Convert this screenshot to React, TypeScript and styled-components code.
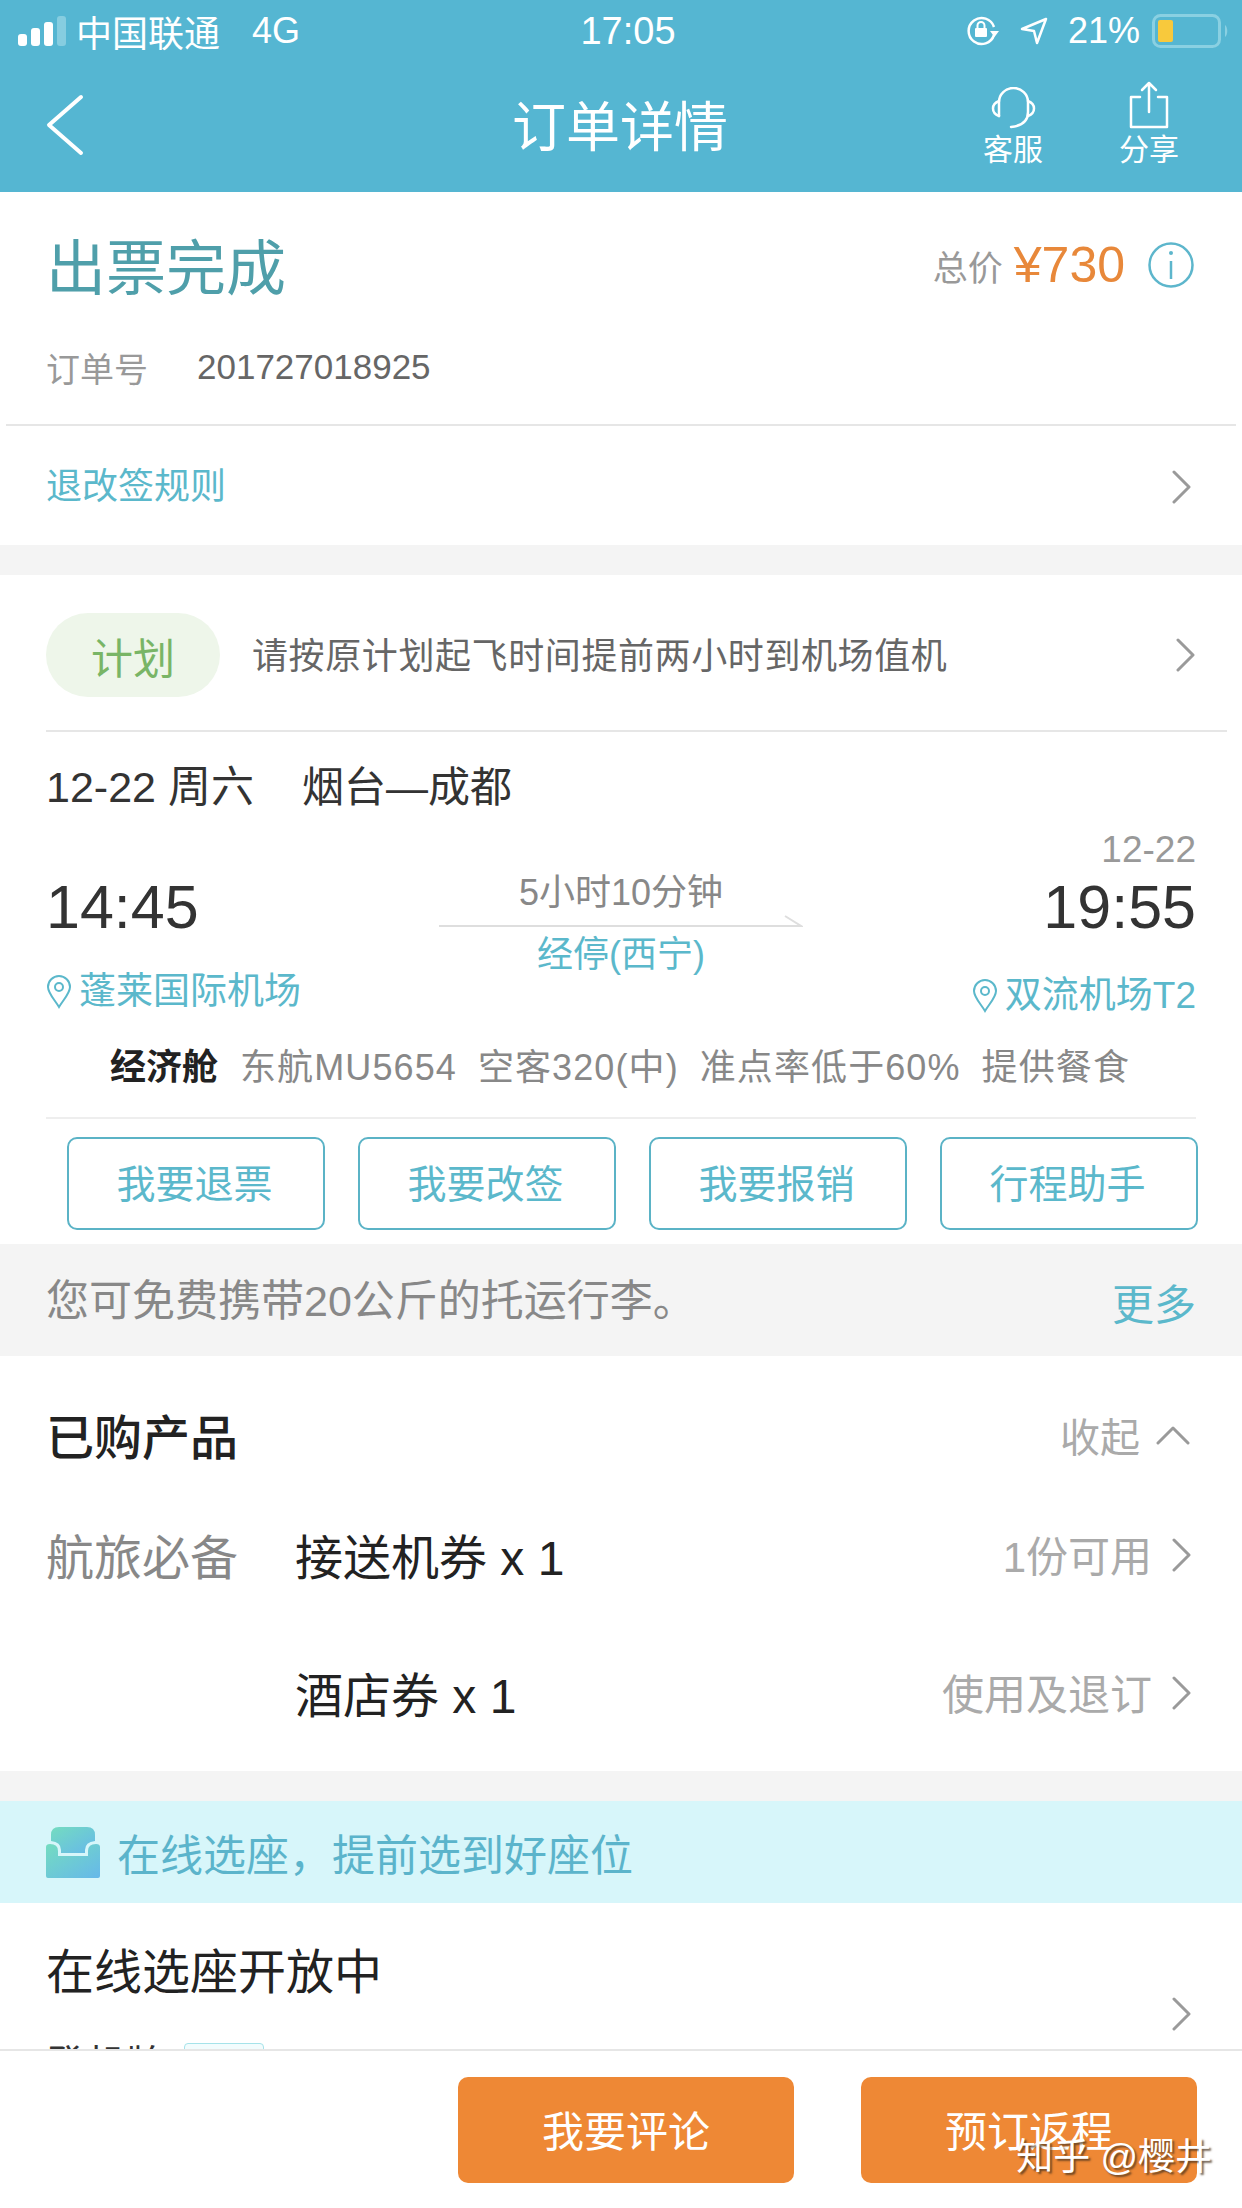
import styled, { createGlobalStyle } from 'styled-components'

const Global = createGlobalStyle`
    html, body {
        margin: 0;
        padding: 0;
        background: #fff;
    }
    body {
        font-family: "Liberation Sans", "Noto Sans CJK SC", sans-serif;
        color: #333;
    }
    * {
        box-sizing: border-box;
    }
`

const Page = styled.div`
    position: relative;
    width: 1242px;
    height: 2208px;
    overflow: hidden;
    background: #fff;
`

const Header = styled.header`
    background: #55b6d2;
    color: #fff;
    height: 192px;
`
const StatusBar = styled.div`
    height: 62px;
    padding: 0 12px 0 18px;
    display: grid;
    grid-template-columns: 1fr auto 1fr;
    align-items: center;
    font-size: 36px;
`
const StatusLeft = styled.div`
    display: flex;
    align-items: center;
`
const Carrier = styled.span`
    margin-left: 10px;
    margin-right: 32px;
`
const Clock = styled.div`
    font-size: 38px;
    margin-left: 8px;
`
const StatusRight = styled.div`
    display: flex;
    align-items: center;
    justify-content: flex-end;
`
const Percent = styled.span`
    margin: 0 12px 0 20px;
`
const Nav = styled.nav`
    height: 130px;
    display: grid;
    grid-template-columns: 1fr auto 1fr;
    align-items: center;
    padding: 0 63px 0 46px;
`
const NavTitle = styled.div`
    font-size: 54px;
    margin-top: -8px;
    margin-left: 15px;
`
const NavActions = styled.div`
    display: flex;
    justify-content: flex-end;
    gap: 76px;
    margin-top: 4px;
`
const NavAction = styled.div`
    display: flex;
    flex-direction: column;
    align-items: center;
    gap: 3px;
    font-size: 30px;
    line-height: 36px;
`

const Section = styled.section<{ $bottom?: number }>`
    background: #fff;
    padding-bottom: ${props => props.$bottom || 0}px;
`
const Gap = styled.div`
    height: 30px;
    background: #f4f4f4;
`
const Divider = styled.div<{ $left: number; $right: number; $color?: string }>`
    height: 2px;
    margin: 0 ${props => props.$right}px 0 ${props => props.$left}px;
    background: ${props => props.$color || '#e6e6e6'};
`

const TitleRow = styled.div`
    height: 138px;
    padding: 5px 48px 0 46px;
    display: flex;
    align-items: center;
    justify-content: space-between;
`
const StatusTitle = styled.h1`
    margin: 0;
    font-size: 60px;
    font-weight: 400;
    color: #4f9faa;
`
const PriceBox = styled.div`
    display: flex;
    align-items: center;
    margin-top: 3px;
`
const PriceLabel = styled.span`
    font-size: 35px;
    color: #999;
    margin-right: 11px;
`
const PriceValue = styled.span`
    font-size: 50px;
    color: #e8883a;
    margin-right: 23px;
`
const OrderRow = styled.div`
    height: 94px;
    padding: 0 46px 20px;
    display: flex;
    align-items: center;
    font-size: 34px;
`
const OrderLabel = styled.span`
    color: #999;
    width: 151px;
`
const OrderNumber = styled.span`
    color: #666;
    font-size: 35px;
`
const RuleRow = styled.div`
    height: 119px;
    padding: 0 50px 6px 46px;
    display: flex;
    align-items: center;
    justify-content: space-between;
    font-size: 36px;
    color: #5bb8cb;

    svg {
        margin-top: 8px;
    }
`

const PlanRow = styled.div`
    height: 155px;
    padding: 38px 46px 33px 46px;
    display: flex;
    align-items: center;
    font-size: 36px;
    color: #666;
`
const PlanPill = styled.div`
    width: 174px;
    height: 84px;
    border-radius: 42px;
    background: #eef6ea;
    color: #79b566;
    font-size: 42px;
    display: flex;
    align-items: center;
    justify-content: center;
    margin-right: 32px;
`
const PlanText = styled.span`
    flex: 1;
    letter-spacing: .6px;
    margin-top: -5px;
`
const RouteRow = styled.div`
    height: 62px;
    padding: 0 46px;
    display: flex;
    align-items: center;
    font-size: 43px;
    color: #333;
    margin-top: 20px;
`
const RouteCities = styled.span`
    font-size: 42px;
    margin-left: 48px;
`
const FlightGrid = styled.div`
    display: grid;
    grid-template-columns: 1fr 364px 1fr;
    padding: 0 46px;
    height: 216px;
`
const FlightSide = styled.div<{ $right?: boolean }>`
    display: flex;
    flex-direction: column;
    align-items: ${props => props.$right ? 'flex-end' : 'flex-start'};
`
const DateSmall = styled.div`
    height: 40px;
    line-height: 40px;
    margin-top: 16px;
    font-size: 37px;
    color: #999;
`
const TimeBig = styled.div<{ $top: number }>`
    font-size: 61px;
    line-height: 70px;
    color: #333;
    margin-top: ${props => props.$top}px;
`
const Airport = styled.div<{ $top: number }>`
    display: flex;
    align-items: center;
    gap: 7px;
    font-size: 37px;
    line-height: 44px;
    color: #5bb8cb;
    margin-top: ${props => props.$top}px;
`
const FlightMiddle = styled.div`
    display: flex;
    flex-direction: column;
    align-items: center;
    padding-top: 57px;
`
const Duration = styled.div`
    font-size: 36px;
    line-height: 44px;
    color: #888;
`
const ArrowLine = styled.svg`
    display: block;
    margin-top: -1px;
`
const StopInfo = styled.div`
    font-size: 36px;
    line-height: 44px;
    color: #5bb8cb;
    margin-top: 5px;
`
const InfoRow = styled.div`
    height: 87px;
    padding: 0 0 19px 110px;
    display: flex;
    align-items: center;
    font-size: 36px;
    color: #888;
    white-space: nowrap;
`
const CabinName = styled.b`
    color: #222;
    margin-right: 22px;
`
const InfoItem = styled.span`
    margin-right: 21px;
    letter-spacing: 1.1px;
`
const ButtonRow = styled.div`
    display: grid;
    grid-template-columns: repeat(4, 258px);
    gap: 33px;
    padding: 18px 0 14px 67px;
`
const OutlineButton = styled.div`
    height: 93px;
    padding: 0 3px 5px 0;
    border: 2px solid #5bb3c6;
    border-radius: 10px;
    color: #5bb8cb;
    font-size: 39px;
    display: flex;
    align-items: center;
    justify-content: center;
`
const BaggageBar = styled.div`
    height: 112px;
    background: #f4f4f4;
    padding: 0 46px 6px;
    display: flex;
    align-items: center;
    justify-content: space-between;
    font-size: 43px;
    color: #888;
`
const MoreLink = styled.span`
    font-size: 42px;
    color: #5bb8cb;
    margin-top: 8px;
`

const ProductHead = styled.div`
    height: 129px;
    padding: 27px 52px 0 46px;
    display: flex;
    align-items: center;
    justify-content: space-between;
`
const ProductTitle = styled.h2`
    margin: 0;
    font-size: 48px;
    font-weight: 500;
    color: #222;
`
const Collapse = styled.div`
    display: flex;
    align-items: center;
    gap: 16px;
    margin-top: 2px;
    font-size: 40px;
    color: #aaa;
`
const ProductRow = styled.div<{ $height: number }>`
    height: ${props => props.$height}px;
    padding: 0 50px 0 46px;
    display: grid;
    grid-template-columns: 249px 1fr auto;
    align-items: center;
`
const ProductGroup = styled.span`
    font-size: 48px;
    color: #888;
`
const ProductName = styled.span`
    font-size: 48px;
    color: #222;
`
const ProductAction = styled.span`
    display: flex;
    align-items: center;
    gap: 20px;
    font-size: 42px;
    color: #aaa;

    svg {
        margin-top: 3px;
    }
`

const SeatBanner = styled.div`
    height: 102px;
    background: #d7f6fa;
    padding: 0 46px;
    display: flex;
    align-items: center;
    font-size: 43px;
    color: #5bb4cb;
`
const SeatBody = styled.div`
    position: relative;
    padding: 41px 46px 0;
`
const SeatTitle = styled.div`
    font-size: 48px;
    line-height: 58px;
    color: #222;
`
const SeatChevron = styled.div`
    position: absolute;
    top: 94px;
    right: 50px;
`
const SeatMeta = styled.div`
    display: flex;
    align-items: flex-start;
    gap: 18px;
    margin-top: 41px;
    font-size: 40px;
    line-height: 44px;
    color: #333;
`
const SeatTag = styled.span`
    width: 80px;
    height: 44px;
    background: #f2fcfd;
    border: 1px solid #a5e3ea;
    border-radius: 4px;
`

const BottomBar = styled.div`
    position: absolute;
    left: 0;
    right: 0;
    top: 2049px;
    bottom: 0;
    background: #fff;
    border-top: 2px solid #e6e6e6;
    padding: 26px 45px 0 0;
    display: flex;
    justify-content: flex-end;
    gap: 67px;
`
const OrangeButton = styled.div`
    width: 336px;
    height: 106px;
    padding-bottom: 4px;
    border-radius: 10px;
    background: #ee8835;
    color: #fff;
    font-size: 42px;
    display: flex;
    align-items: center;
    justify-content: center;
`
const Watermark = styled.div`
    position: absolute;
    right: 30px;
    bottom: 27px;
    font-size: 37px;
    color: #fff;
    text-shadow: 2px 2px 2px rgba(70, 50, 30, .75);
    white-space: nowrap;
`

const Chevron = () => (
    <svg width="20" height="34" viewBox="0 0 20 34" fill="none">
        <path d="M2 2 L17 17 L2 32" stroke="#9a9a9a" strokeWidth="3" strokeLinecap="round" strokeLinejoin="round" />
    </svg>
)

const Pin = () => (
    <svg width="26" height="34" viewBox="0 0 26 34" fill="none" stroke="#5bb8cb" strokeWidth="2">
        <path d="M13 32 C8 24 2 18 2 12 A11 11 0 0 1 24 12 C24 18 18 24 13 32 Z" />
        <circle cx="13" cy="12" r="4" />
    </svg>
)

const App = () => (
    <Page>
        <Global />
        <Header>
            <StatusBar>
                <StatusLeft>
                    <svg width="48" height="30" viewBox="0 0 48 30" fill="#fff">
                        <rect x="0" y="18" width="9" height="12" rx="3" />
                        <rect x="13" y="12" width="9" height="18" rx="3" />
                        <rect x="26" y="6" width="9" height="24" rx="3" />
                        <rect x="39" y="0" width="9" height="30" rx="3" fill="#86cde0" />
                    </svg>
                    <Carrier>中国联通</Carrier>
                    <span>4G</span>
                </StatusLeft>
                <Clock>17:05</Clock>
                <StatusRight>
                    <svg width="36" height="30" viewBox="0 0 36 30" fill="none" stroke="#fff" strokeWidth="2.5">
                        <path d="M29 19 A13 13 0 1 1 29 11" />
                        <path d="M25 15 L34 15 L29.5 21 Z" fill="#fff" stroke="none" />
                        <rect x="10" y="12" width="12" height="9" rx="1" fill="#fff" stroke="none" />
                        <path d="M12.5 12 V9.5 A3.5 3.5 0 0 1 19.5 9.5 V12" strokeWidth="2" />
                    </svg>
                    <svg width="28" height="28" viewBox="0 0 28 28" fill="none" stroke="#fff" strokeWidth="2.5" strokeLinejoin="round" style={{ marginLeft: 19 }}>
                        <path d="M26 2 L2 12 L14 14 L17 26 Z" />
                    </svg>
                    <Percent>21%</Percent>
                    <svg width="78" height="34" viewBox="0 0 78 34" fill="none">
                        <rect x="1.5" y="1.5" width="66" height="31" rx="7" stroke="#8ad0e2" strokeWidth="3" />
                        <rect x="6" y="6" width="15" height="22" rx="2" fill="#f8c93c" />
                        <path d="M73 11 C76 13 76 21 73 23 Z" fill="#8ad0e2" />
                    </svg>
                </StatusRight>
            </StatusBar>
            <Nav>
                <svg width="38" height="62" viewBox="0 0 38 62" fill="none" stroke="#fff" strokeWidth="4" strokeLinecap="round" strokeLinejoin="round" style={{ marginTop: -4 }}>
                    <path d="M35 3 L3 31 L35 59" />
                </svg>
                <NavTitle>订单详情</NavTitle>
                <NavActions>
                    <NavAction>
                        <svg width="46" height="42" viewBox="0 0 46 42" fill="none" stroke="#fff" strokeWidth="2.5" strokeLinecap="round" style={{ marginTop: -3 }}>
                            <path d="M9 29 V15 A14.5 14 0 0 1 38 15 V25 C38 35 31 39 21 40" />
                            <path d="M9 14 C1 17 1 26 9 29" />
                            <path d="M38 14 C46 17 46 26 38 29" />
                        </svg>
                        客服
                    </NavAction>
                    <NavAction>
                        <svg width="44" height="48" viewBox="0 0 44 48" fill="none" stroke="#fff" strokeWidth="2.5" strokeLinecap="round" strokeLinejoin="round" style={{ marginTop: -9 }}>
                            <path d="M13 16 H4 V46 H40 V16 H31" />
                            <path d="M22 31 V2 M15 9 L22 2 L29 9" />
                        </svg>
                        分享
                    </NavAction>
                </NavActions>
            </Nav>
        </Header>

        <Section>
            <TitleRow>
                <StatusTitle>出票完成</StatusTitle>
                <PriceBox>
                    <PriceLabel>总价</PriceLabel>
                    <PriceValue>¥730</PriceValue>
                    <svg width="46" height="46" viewBox="0 0 46 46" fill="none" stroke="#5db6cc" strokeWidth="2.5">
                        <circle cx="23" cy="23" r="21.5" />
                        <path d="M23 19 V37" />
                        <circle cx="23" cy="11" r="2" fill="#5db6cc" stroke="none" />
                    </svg>
                </PriceBox>
            </TitleRow>
            <OrderRow>
                <OrderLabel>订单号</OrderLabel>
                <OrderNumber>201727018925</OrderNumber>
            </OrderRow>
            <Divider $left={6} $right={6} />
            <RuleRow>
                退改签规则
                <Chevron />
            </RuleRow>
        </Section>
        <Gap />

        <Section>
            <PlanRow>
                <PlanPill>计划</PlanPill>
                <PlanText>请按原计划起飞时间提前两小时到机场值机</PlanText>
                <Chevron />
            </PlanRow>
            <Divider $left={46} $right={15} />
            <RouteRow>
                12-22 周六
                <RouteCities>烟台—成都</RouteCities>
            </RouteRow>
            <FlightGrid>
                <FlightSide>
                    <TimeBig $top={58}>14:45</TimeBig>
                    <Airport $top={28}><Pin />蓬莱国际机场</Airport>
                </FlightSide>
                <FlightMiddle>
                    <Duration>5小时10分钟</Duration>
                    <ArrowLine width="364" height="14" viewBox="0 0 364 14" fill="none" stroke="#dedede" strokeWidth="2">
                        <path d="M0 12 H362 L346 2" />
                    </ArrowLine>
                    <StopInfo>经停(西宁)</StopInfo>
                </FlightMiddle>
                <FlightSide $right>
                    <DateSmall>12-22</DateSmall>
                    <TimeBig $top={2}>19:55</TimeBig>
                    <Airport $top={32}><Pin />双流机场T2</Airport>
                </FlightSide>
            </FlightGrid>
            <InfoRow>
                <CabinName>经济舱</CabinName>
                <InfoItem>东航MU5654</InfoItem>
                <InfoItem>空客320(中)</InfoItem>
                <InfoItem>准点率低于60%</InfoItem>
                <InfoItem>提供餐食</InfoItem>
            </InfoRow>
            <Divider $left={46} $right={46} $color="#eeeeee" />
            <ButtonRow>
                <OutlineButton>我要退票</OutlineButton>
                <OutlineButton>我要改签</OutlineButton>
                <OutlineButton>我要报销</OutlineButton>
                <OutlineButton>行程助手</OutlineButton>
            </ButtonRow>
            <BaggageBar>
                您可免费携带20公斤的托运行李。
                <MoreLink>更多</MoreLink>
            </BaggageBar>
        </Section>

        <Section $bottom={10}>
            <ProductHead>
                <ProductTitle>已购产品</ProductTitle>
                <Collapse>
                    收起
                    <svg width="34" height="20" viewBox="0 0 34 20" fill="none" stroke="#9a9a9a" strokeWidth="3" strokeLinecap="round" strokeLinejoin="round">
                        <path d="M2 18 L17 3 L32 18" />
                    </svg>
                </Collapse>
            </ProductHead>
            <ProductRow $height={137}>
                <ProductGroup>航旅必备</ProductGroup>
                <ProductName>接送机券 x 1</ProductName>
                <ProductAction>1份可用<Chevron /></ProductAction>
            </ProductRow>
            <ProductRow $height={139}>
                <span />
                <ProductName>酒店券 x 1</ProductName>
                <ProductAction>使用及退订<Chevron /></ProductAction>
            </ProductRow>
        </Section>
        <Gap />

        <SeatBanner>
            <svg width="54" height="51" viewBox="0 0 54 51" style={{ marginRight: 17 }}>
                <defs>
                    <linearGradient id="sofa" x1="0" y1="0" x2="1" y2="1">
                        <stop offset="0" stopColor="#74dcc0" />
                        <stop offset="1" stopColor="#66b8ea" />
                    </linearGradient>
                </defs>
                <path fill="url(#sofa)" d="M5 8 Q5 0 13 0 H41 Q49 0 49 8 V14 Q39 15 39 23 V26 H15 V23 Q15 15 5 14 Z" />
                <path fill="url(#sofa)" d="M0 20 Q0 17 4 17 Q12 17 12 24 V29 H42 V24 Q42 17 50 17 Q54 17 54 20 V49 Q54 51 52 51 H2 Q0 51 0 49 Z" />
            </svg>
            在线选座，提前选到好座位
        </SeatBanner>
        <SeatBody>
            <SeatTitle>在线选座开放中</SeatTitle>
            <SeatChevron><Chevron /></SeatChevron>
            <SeatMeta>
                登机牌
                <SeatTag />
            </SeatMeta>
        </SeatBody>

        <BottomBar>
            <OrangeButton>我要评论</OrangeButton>
            <OrangeButton>预订返程</OrangeButton>
            <Watermark>知乎 @樱井</Watermark>
        </BottomBar>
    </Page>
)

export default App
